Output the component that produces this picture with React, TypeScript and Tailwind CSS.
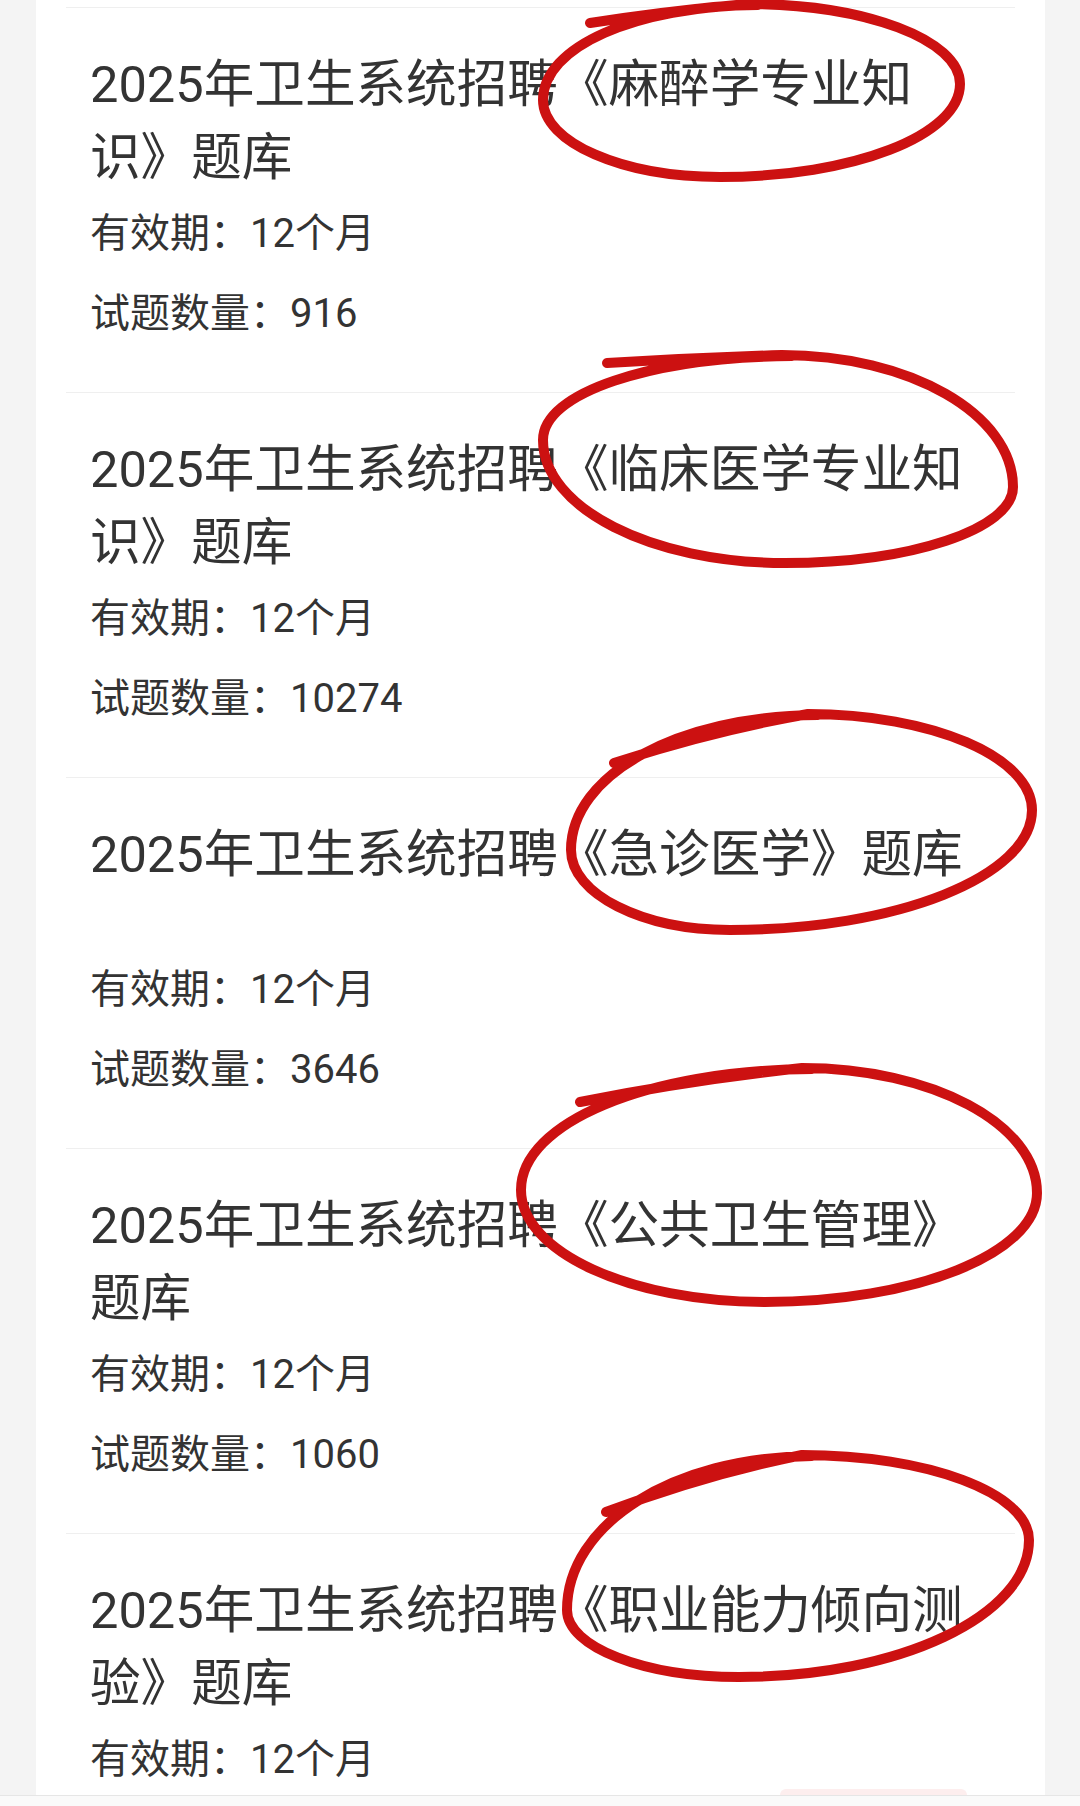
import React from "react";

type P = [number, number];
type Circle = { S: P; T: P; R: P; B: P; L: P };

const items: { lines: string[]; meta: string[]; single?: boolean }[] = [
  {
    lines: ["2025年卫生系统招聘《麻醉学专业知", "识》题库"],
    meta: ["有效期：12个月", "试题数量：916"],
  },
  {
    lines: ["2025年卫生系统招聘《临床医学专业知", "识》题库"],
    meta: ["有效期：12个月", "试题数量：10274"],
  },
  {
    lines: ["2025年卫生系统招聘《急诊医学》题库"],
    meta: ["有效期：12个月", "试题数量：3646"],
    single: true,
  },
  {
    lines: ["2025年卫生系统招聘《公共卫生管理》", "题库"],
    meta: ["有效期：12个月", "试题数量：1060"],
  },
  {
    lines: ["2025年卫生系统招聘《职业能力倾向测", "验》题库"],
    meta: ["有效期：12个月"],
  },
];

const circles: Circle[] = [
  { S: [590, 23], T: [748, 4], R: [960, 84], B: [720, 177], L: [543, 100] },
  { S: [607, 363], T: [782, 355], R: [1013, 487], B: [785, 563], L: [543, 440] },
  { S: [614, 763], T: [808, 714], R: [1032, 810], B: [730, 930], L: [571, 850] },
  { S: [580, 1102], T: [802, 1068], R: [1037, 1193], B: [765, 1302], L: [521, 1190] },
  { S: [606, 1512], T: [802, 1455], R: [1029, 1540], B: [739, 1677], L: [567, 1610] },
];

function circlePath(c: Circle): string {
  const k = 0.5523;
  const { S, T, R, B, L } = c;
  const f = (n: number) => n.toFixed(1);
  const q: P = [(S[0] + T[0]) / 2, T[1] + (S[1] - T[1]) * 0.35];
  let d = `M ${f(S[0])} ${f(S[1])} Q ${f(q[0])} ${f(q[1])} ${f(T[0])} ${f(T[1])} `;
  d += `C ${f(T[0] + k * (R[0] - T[0]))} ${f(T[1])} ${f(R[0])} ${f(R[1] - k * (R[1] - T[1]))} ${f(R[0])} ${f(R[1])} `;
  d += `C ${f(R[0])} ${f(R[1] + k * (B[1] - R[1]))} ${f(B[0] + k * (R[0] - B[0]))} ${f(B[1])} ${f(B[0])} ${f(B[1])} `;
  d += `C ${f(B[0] - k * (B[0] - L[0]))} ${f(B[1])} ${f(L[0])} ${f(L[1] + k * (B[1] - L[1]))} ${f(L[0])} ${f(L[1])} `;
  d += `C ${f(L[0])} ${f(L[1] - k * (L[1] - T[1]))} ${f(T[0] - k * (T[0] - L[0]))} ${f(T[1] + 2)} ${f(T[0] + 10)} ${f(T[1] + 1)}`;
  return d;
}

export default function App() {
  return (
    <div className="relative w-[1080px] h-[1806px] overflow-hidden bg-[#f4f4f4] font-['Roboto','Noto_Sans_CJK_SC',sans-serif] text-[#333333]">
      <div className="flex flex-col h-full">
        <div className="ml-[36px] w-[1009px] h-[1795px] bg-white overflow-hidden pt-[7px] px-[30px]">
          {items.map((item, i) => (
            <div key={i} className="border-t border-[#efefef] pl-[24px] pt-[40px] pb-[38px]">
              <div
                className={
                  item.single
                    ? "text-[50.6px] leading-[73px] min-h-[132px]"
                    : "text-[50.6px] leading-[73px]"
                }
              >
                {item.lines.map((l, j) => (
                  <div key={j} className="whitespace-nowrap">
                    {l}
                  </div>
                ))}
              </div>
              {item.meta.map((m, j) => (
                <div key={j} className="text-[40px] leading-[80px] whitespace-nowrap">
                  {m}
                </div>
              ))}
            </div>
          ))}
        </div>
        <div className="h-[11px] border-t border-[#e6e6e6] bg-[#fafafa]" />
      </div>
      <div className="absolute left-[780px] top-[1789px] w-[187px] h-[6px] rounded-t-full bg-[#fdeeee]" />
      <svg
        className="absolute left-0 top-0 pointer-events-none"
        width="1080"
        height="1806"
        viewBox="0 0 1080 1806"
        fill="none"
      >
        {circles.map((c, i) => (
          <path
            key={i}
            d={circlePath(c)}
            stroke="#cc1111"
            strokeWidth={10}
            strokeLinecap="round"
            strokeLinejoin="round"
          />
        ))}
      </svg>
    </div>
  );
}
